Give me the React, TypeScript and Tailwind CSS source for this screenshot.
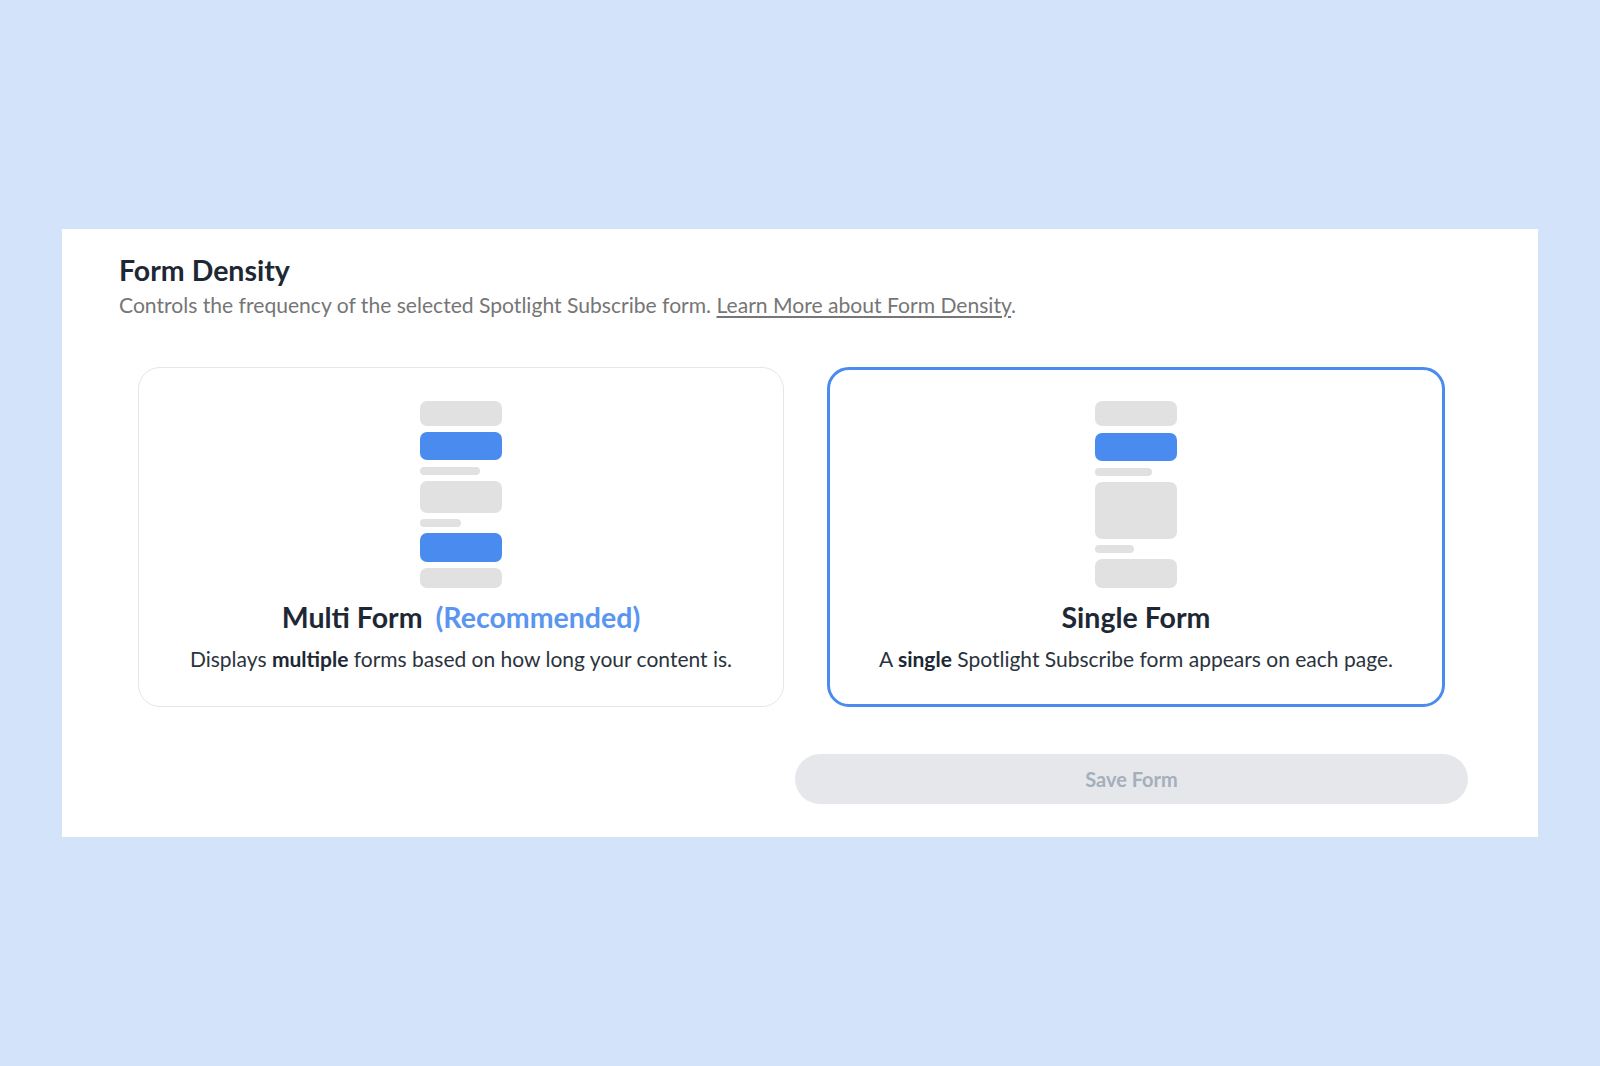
import React from "react";

type Bar = { h: number; w?: number; blue?: boolean; line?: boolean; gap: number };

const multiBars: Bar[] = [
  { h: 25, gap: 0 },
  { h: 28, blue: true, gap: 6 },
  { h: 8, w: 60, line: true, gap: 7 },
  { h: 32, gap: 6 },
  { h: 8, w: 41, line: true, gap: 6 },
  { h: 29, blue: true, gap: 6 },
  { h: 20, gap: 6 },
];

const singleBars: Bar[] = [
  { h: 25, gap: 0 },
  { h: 28, blue: true, gap: 7 },
  { h: 8, w: 57, line: true, gap: 7 },
  { h: 57, gap: 6 },
  { h: 8, w: 39, line: true, gap: 6 },
  { h: 29, gap: 6 },
];

// little drawing of a page with forms in it
function FormIllustration({ bars }: { bars: Bar[] }) {
  return (
    <div className="flex flex-col w-[82px]">
      {bars.map((b, i) => (
        <div
          key={i}
          className={
            b.line
              ? "rounded-full bg-[#e1e1e1]"
              : b.blue
              ? "rounded-[7px] bg-[#4a8bef]"
              : "rounded-[7px] bg-[#e1e1e1]"
          }
          style={{ height: b.h, width: b.w ?? 82, marginTop: b.gap }}
        />
      ))}
    </div>
  );
}

function DensityCard({
  selected,
  width,
  bars,
  title,
  children,
}: {
  selected?: boolean;
  width: string;
  bars: Bar[];
  title: React.ReactNode;
  children: React.ReactNode;
}) {
  return (
    <div
      className={
        (selected
          ? "border-[3px] border-[#4a8bef] pt-[31px] "
          : "border border-[#e6e6e6] pt-[33px] ") +
        width +
        " h-[340px] rounded-[22px] bg-white flex flex-col items-center cursor-pointer"
      }
    >
      <FormIllustration bars={bars} />
      <h3 className="mt-[12px] text-[28.5px] leading-[34px] font-bold text-[#1d2834]">{title}</h3>
      <p className="mt-[11px] text-[21px] leading-[28px] text-[#2b333d]">{children}</p>
    </div>
  );
}

export default function App() {
  return (
    <div
      className="min-h-screen bg-[#d3e3fa] pt-[229px] pl-[62px]"
      style={{ fontFamily: "Lato, 'Open Sans', sans-serif" }}
    >
      <section className="w-[1476px] h-[608px] bg-white pl-[57px] pt-[24px]">
        <h2 className="text-[28.5px] leading-[34px] font-bold text-[#1d2834]">Form Density</h2>
        <p className="mt-[4px] text-[21.1px] leading-[28px] text-[#767676]">
          Controls the frequency of the selected Spotlight Subscribe form.{" "}
          <a href="#" className="underline underline-offset-[3px]">
            Learn More about Form Density
          </a>
          .
        </p>

        <div className="mt-[48px] ml-[19px] flex gap-[43px]">
          <DensityCard
            width="w-[646px]"
            bars={multiBars}
            title={
              <>
                Multi Form <span className="ml-[6px] text-[#5a95f0]">(Recommended)</span>
              </>
            }
          >
            Displays <strong className="font-bold text-[#1d2834]">multiple</strong> forms based on how long your
            content is.
          </DensityCard>
          <DensityCard selected width="w-[618px]" bars={singleBars} title="Single Form">
            A <strong className="font-bold text-[#1d2834]">single</strong> Spotlight Subscribe form appears on each
            page.
          </DensityCard>
        </div>

        <button
          disabled
          className="mt-[47px] ml-[676px] w-[673px] h-[50px] rounded-full bg-[#e6e7eb] text-[20px] font-bold text-[#a5afbb]"
        >
          Save Form
        </button>
      </section>
    </div>
  );
}
